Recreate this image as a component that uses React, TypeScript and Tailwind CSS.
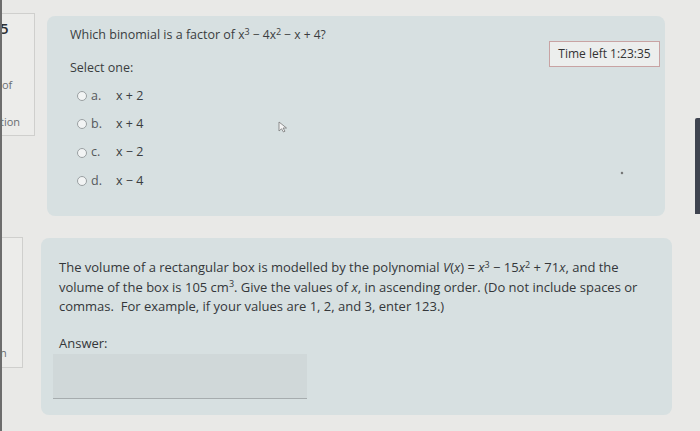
import React from "react";

const font = { fontFamily: '"Open Sans", "Noto Sans", sans-serif' };

const options = [
  { letter: "a.", expr: "x + 2" },
  { letter: "b.", expr: "x + 4" },
  { letter: "c.", expr: "x − 2" },
  { letter: "d.", expr: "x − 4" },
];

function Radio() {
  return (
    <span className="inline-block w-[10px] h-[10px] rounded-full border border-[#9aa0a2] bg-[#f2f4f4] shrink-0" />
  );
}

function Sup({ children }: { children: React.ReactNode }) {
  return <sup className="text-[9px] leading-none">{children}</sup>;
}

export default function App() {
  return (
    <div
      className="w-[700px] h-[431px] bg-[#e9e9e7] overflow-hidden flex text-[#3a3d40] relative"
      style={font}
    >
      {/* left edge shadow */}
      <div className="w-[2px] shrink-0 bg-[#6d6d6d]" />

      {/* cropped quiz navigation */}
      <aside className="w-[33px] shrink-0 flex flex-col">
        <div className="mt-[13px] h-[123px] w-[33px] border border-[#cfcfcd] border-l-0 bg-[#ececea] flex flex-col overflow-hidden">
          <span className="mt-[7px] -ml-[2px] text-[15px] leading-[14px] font-semibold text-[#2d2f31]">5</span>
          <span className="mt-[44px] text-[11px] leading-[12px] text-[#6a6e72]">of</span>
          <span className="mt-[25px] -ml-[2px] text-[11px] leading-[12px] text-[#6a6e72]">tion</span>
        </div>
        <div className="mt-[101px] h-[131px] w-[21px] border border-[#cfcfcd] border-l-0 bg-[#ececea] flex flex-col justify-end overflow-hidden pb-[8px]">
          <span className="-ml-[2px] text-[11px] leading-[12px] text-[#6a6e72]">n</span>
        </div>
      </aside>

      <main className="flex flex-col">
        {/* question 1 */}
        <section className="mt-[16px] ml-[12px] w-[618px] h-[200px] rounded-[8px] bg-[#d7e0e1] flex flex-col pl-[23px] pr-[5px] relative">
          <div className="flex items-start justify-between">
            <p className="mt-[11px] text-[12.5px] leading-[16px]">
              Which binomial is a factor of{" "}
              <span className="text-[12px]">
                x<Sup>3</Sup> − 4x<Sup>2</Sup> − x + 4?
              </span>
            </p>
            <div className="mt-[25px] w-[111px] h-[26px] border border-[#c8a3a3] bg-[#eceeed] flex items-center justify-center text-[12px] text-[#333]">
              Time left 1:23:35
            </div>
          </div>
          <p className="-mt-[7px] text-[12.5px] leading-[16px]">Select one:</p>
          <ul className="mt-[12px] flex flex-col gap-[12.3px] pl-[7px]">
            {options.map((o) => (
              <li key={o.letter} className="flex items-center h-[16px] text-[12.5px]">
                <Radio />
                <span className="ml-[4px] w-[25px] text-[#55595c]">{o.letter}</span>
                <span className="text-[#3a3d40]">{o.expr}</span>
              </li>
            ))}
          </ul>
          {/* mouse pointer */}
          <svg
            className="absolute left-[231px] top-[105px]"
            width="10"
            height="12"
            viewBox="0 0 10 12"
          >
            <path d="M1 1 L1 10 L3.5 7.8 L5.5 11 L7 10.2 L5 7 L8.5 7 Z" fill="#f5f5f5" stroke="#777" strokeWidth="0.8" />
          </svg>
          <span className="absolute left-[574px] top-[156px] w-[2px] h-[2px] bg-[#666] rotate-45" />
        </section>

        {/* question 2 */}
        <section className="mt-[22px] ml-[6px] w-[631px] h-[177px] rounded-[8px] bg-[#d7e0e1] flex flex-col pl-[18px] pr-[20px]">
          <p className="mt-[20px] text-[13px] leading-[19.5px] text-[#34373a]">
            The volume of a rectangular box is modelled by the polynomial{" "}
            <i>V</i>(<i>x</i>) = <i>x</i>
            <Sup>3</Sup> − 15<i>x</i>
            <Sup>2</Sup> + 71<i>x</i>, and the volume of the box is 105 cm
            <Sup>3</Sup>. Give the values of <i>x</i>, in ascending order. (Do not include
            spaces or commas.&nbsp; For example, if your values are 1, 2, and 3, enter 123.)
          </p>
          <p className="mt-[18px] text-[13px] leading-[16px] text-[#34373a]">Answer:</p>
          <div className="mt-[3px] ml-[-6px] w-[254px] h-[45px] bg-[#d0d8d9] border-b border-[#a6acae]" />
        </section>
      </main>

      {/* right edge dark element */}
      <div className="absolute right-0 top-[118px] w-[5px] h-[96px] bg-[#3f4450] rounded-tl-[2px]" />
    </div>
  );
}
